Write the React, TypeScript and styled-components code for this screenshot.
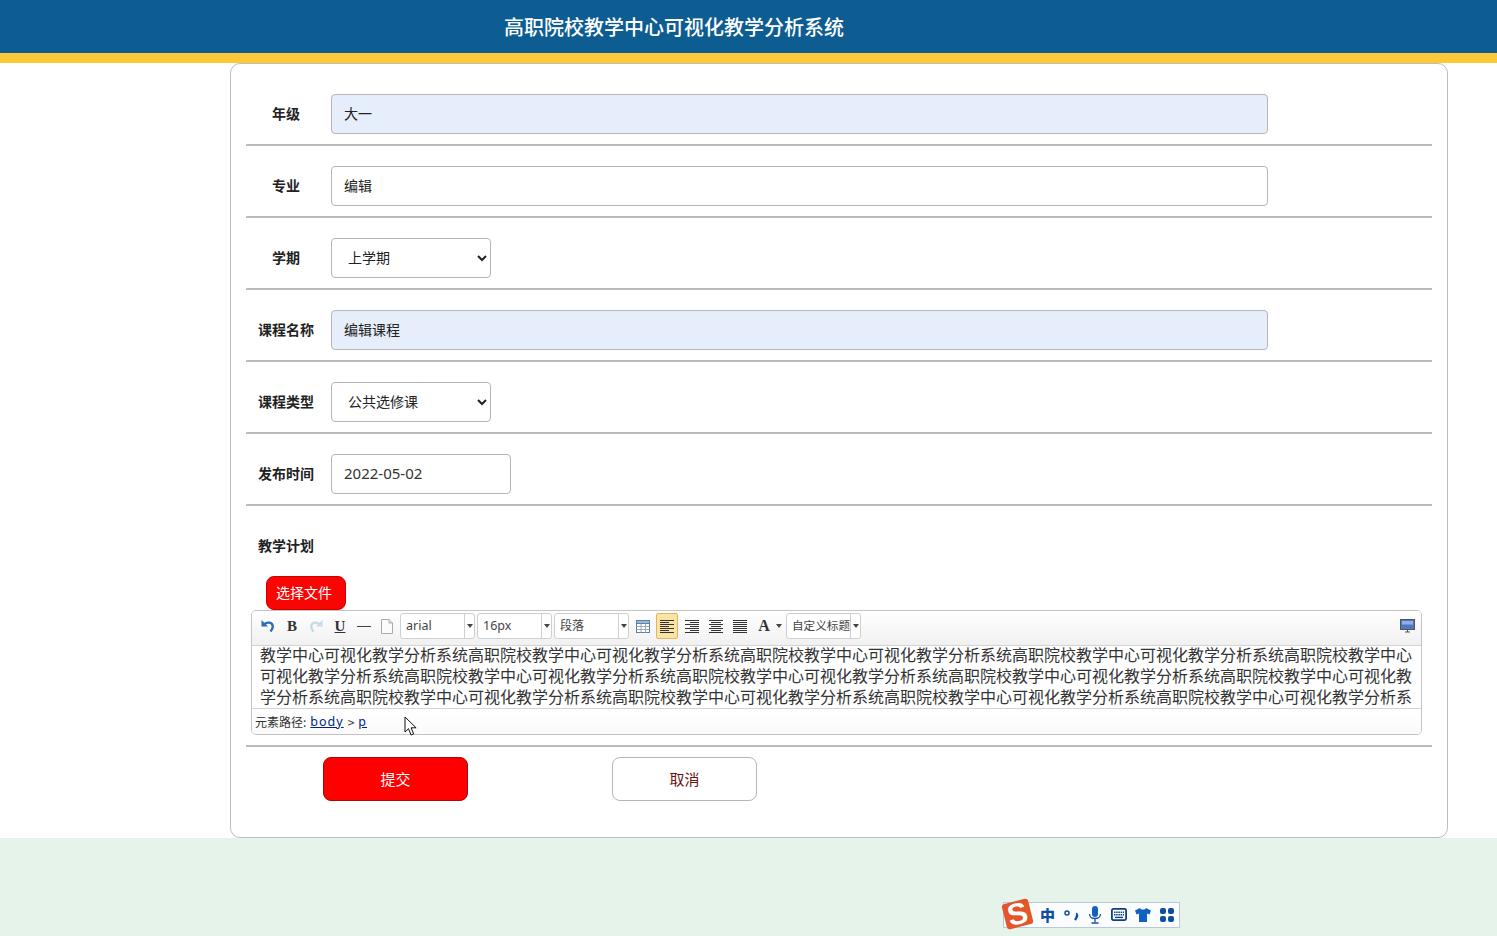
import styled, { createGlobalStyle } from 'styled-components';

const GlobalStyle = createGlobalStyle`
  html, body {
    margin: 0;
    padding: 0;
    background: #e5f3ea;
  }
  body {
    font-family: "Noto Sans CJK SC", "Noto Sans", sans-serif;
  }
  * {
    box-sizing: border-box;
  }
`;

const Page = styled.div`
  position: relative;
  width: 1497px;
  height: 936px;
  overflow: hidden;
  background: #e5f3ea;
`;

const Header = styled.header`
  height: 63px;
  background: #0d5c92;
  border-bottom: 10px solid #fdc938;
  padding-left: 504px;
`;

const Title = styled.h1`
  margin: 0;
  font-size: 20px;
  line-height: 53px;
  font-weight: 500;
  color: #fff;
`;

const Main = styled.main`
  background: #fff;
  padding-left: 230px;
`;

const Card = styled.div`
  width: 1218px;
  height: 775px;
  padding: 10px 15px;
  background: #fff;
  border: 1px solid #bdbdbd;
  border-radius: 10px;
`;

const FormRow = styled.div`
  display: flex;
  align-items: flex-start;
  height: 72px;
  padding-top: 20px;
  border-bottom: 2px solid #bbb;
`;

const EditorRow = styled.div`
  height: 241px;
  padding-top: 20px;
  border-bottom: 2px solid #bbb;
`;

const Label = styled.label`
  width: 80px;
  height: 40px;
  margin-right: 5px;
  flex: none;
  display: block;
  font-size: 14px;
  line-height: 38px;
  font-weight: 700;
  text-align: center;
  color: #222;
`;

const TextInput = styled.input<{ $filled?: boolean; $width?: number }>`
  display: block;
  width: ${(p) => p.$width ?? 937}px;
  height: 40px;
  padding: 0 12px 2px;
  font-family: "Noto Sans CJK SC", "Noto Sans", sans-serif;
  font-size: 14px;
  color: #222;
  background: ${(p) => (p.$filled ? '#e5eefa' : '#fff')};
  border: 1px solid #b5b5b5;
  border-radius: 4px;
  outline: none;
`;

const DateInput = styled(TextInput)`
  font-family: "Noto Sans", sans-serif;
  font-size: 15px;
  color: #333;
`;

const Select = styled.select`
  display: block;
  width: 160px;
  height: 40px;
  padding: 0 12px 2px;
  font-family: "Noto Sans CJK SC", sans-serif;
  font-size: 14px;
  color: #222;
  background: #fff;
  border: 1px solid #b5b5b5;
  border-radius: 4px;
  outline: none;
`;

const FileButton = styled.button`
  display: block;
  width: 80px;
  height: 34px;
  margin: 10px 0 0 20px;
  padding: 0 4px 3px 0;
  font-family: "Noto Sans CJK SC", sans-serif;
  font-size: 14px;
  color: #fff;
  background: #fb0404;
  border: 1px solid #c00;
  border-radius: 8px;
`;

const Editor = styled.div`
  width: 1171px;
  height: 125px;
  margin-left: 5px;
  display: flex;
  flex-direction: column;
  background: #fff;
  border: 1px solid #c4c4c4;
  border-radius: 5px;
  overflow: hidden;
`;

const Toolbar = styled.div`
  display: flex;
  align-items: center;
  flex: none;
  height: 35px;
  padding: 0 2px 4px 2px;
  background: linear-gradient(#ffffff, #f1f1f1);
  border-bottom: 1px solid #d4d4d4;
`;

const ToolIcon = styled.span<{ $active?: boolean; $width?: number }>`
  display: flex;
  align-items: center;
  justify-content: center;
  flex: none;
  width: ${(p) => p.$width ?? 24}px;
  height: 26px;
  color: #333;
  background: ${(p) => (p.$active ? '#fbe3a6' : 'transparent')};
  border: 1px solid ${(p) => (p.$active ? '#e0b75e' : 'transparent')};
  border-radius: 2px;
`;

const TableIcon = styled(ToolIcon)`
  margin-left: 1px;
`;

const ToolLetter = styled.span<{ $underline?: boolean; $size?: number }>`
  font-family: "Liberation Serif", serif;
  font-size: ${(p) => p.$size ?? 15}px;
  font-weight: 700;
  color: #333;
  text-decoration: ${(p) => (p.$underline ? 'underline' : 'none')};
`;

const Combo = styled.div<{ $width: number; $gap?: number }>`
  display: flex;
  flex: none;
  width: ${(p) => p.$width}px;
  height: 26px;
  margin-left: ${(p) => p.$gap ?? 2}px;
  background: #fff;
  border: 1px solid #cfcfcf;
  border-radius: 3px;
`;

const ComboText = styled.span<{ $size?: number }>`
  flex: 1;
  padding-left: 5px;
  font-family: "Noto Sans", "Noto Sans CJK SC", sans-serif;
  font-size: ${(p) => p.$size ?? 12.5}px;
  line-height: 24px;
  color: #444;
  white-space: nowrap;
  overflow: hidden;
  border-right: 1px solid #cfcfcf;
`;

const ComboArrow = styled.span`
  display: flex;
  align-items: center;
  justify-content: center;
  flex: none;
  width: 9px;
  &::before {
    content: '';
    border: 3px solid transparent;
    border-top: 4px solid #444;
    border-bottom: 0;
  }
`;

const Caret = styled.span`
  flex: none;
  width: 0;
  margin: 0 4px 0 2px;
  border: 3px solid transparent;
  border-top: 4px solid #444;
  border-bottom: 0;
`;

const ToolbarSpacer = styled.span`
  flex: 1;
`;

const EditorBody = styled.div`
  flex: 1;
  padding-left: 8px;
  border-bottom: 1px solid #d4d4d4;
`;

const EditorText = styled.p`
  width: 1154px;
  margin: -2px 0 0;
  font-family: "Noto Sans CJK SC", sans-serif;
  font-size: 16px;
  line-height: 21px;
  color: #333;
  word-break: break-all;
`;

const StatusBar = styled.div`
  display: flex;
  gap: 4px;
  flex: none;
  height: 25px;
  padding-left: 3px;
  font-size: 12px;
  line-height: 26px;
  color: #333;
  background: linear-gradient(#fff, #fafafa);
`;

const PathLink = styled.a`
  font-family: "Noto Sans", sans-serif;
  font-size: 12.5px;
  letter-spacing: 1px;
  color: #00247d;
  text-decoration: underline;
`;

const Actions = styled.div`
  display: flex;
  gap: 144px;
  margin-top: 10px;
  padding-left: 77px;
`;

const ActionButton = styled.button<{ $primary?: boolean }>`
  width: 145px;
  height: 44px;
  padding: 0 0 2px;
  font-family: "Noto Sans CJK SC", sans-serif;
  font-size: 15px;
  color: ${(p) => (p.$primary ? '#fff' : '#6a1414')};
  background: ${(p) => (p.$primary ? '#fe0000' : '#fff')};
  border: 1px solid ${(p) => (p.$primary ? '#a80808' : '#b5b5b5')};
  border-radius: 8px;
`;

const Pointer = styled.svg`
  position: absolute;
  left: 404px;
  top: 716px;
`;

const ImeBar = styled.div`
  position: absolute;
  left: 1003px;
  top: 899px;
  display: flex;
  align-items: center;
  width: 177px;
  height: 30px;
`;

const ImeLogo = styled.span`
  position: absolute;
  left: 1px;
  top: 2px;
  width: 27px;
  height: 26px;
  font-family: "Liberation Sans", sans-serif;
  font-size: 30px;
  line-height: 26px;
  font-weight: 700;
  text-align: center;
  color: #fff;
  background: #e2562a;
  border-radius: 3px;
  transform: rotate(-14deg);
`;

const ImeTray = styled.div`
  display: flex;
  align-items: center;
  justify-content: space-between;
  width: 100%;
  height: 26px;
  margin-top: 2px;
  padding: 0 5px 1px 36px;
  background: #fbfcfd;
  border: 1px solid #b9c9d6;
`;

const ImeChar = styled.span`
  font-size: 15px;
  font-weight: 900;
  line-height: 20px;
  color: #0f4fa0;
`;

const rows = ['年级', '专业', '学期', '课程名称', '课程类型', '发布时间'];

// three lines of 72 characters in the editor
const planText = (
  '教学中心可视化教学分析系统' +
  '高职院校教学中心可视化教学分析系统'.repeat(12)
).slice(0, 216);

function AlignIcon({ lines }: { lines: [number, number][] }) {
  return (
    <svg width="14" height="13" viewBox="0 0 14 13">
      {lines.map(([x, w], i) => (
        <rect key={i} x={x} y={i * 2} width={w} height="1" fill="#333" />
      ))}
    </svg>
  );
}

export default function App() {
  return (
    <Page>
      <GlobalStyle />
      <Header>
        <Title>高职院校教学中心可视化教学分析系统</Title>
      </Header>
      <Main>
        <Card>
          <FormRow>
            <Label>{rows[0]}</Label>
            <TextInput $filled readOnly value="大一" />
          </FormRow>
          <FormRow>
            <Label>{rows[1]}</Label>
            <TextInput readOnly value="编辑" />
          </FormRow>
          <FormRow>
            <Label>{rows[2]}</Label>
            <Select defaultValue="上学期">
              <option>上学期</option>
              <option>下学期</option>
            </Select>
          </FormRow>
          <FormRow>
            <Label>{rows[3]}</Label>
            <TextInput $filled readOnly value="编辑课程" />
          </FormRow>
          <FormRow>
            <Label>{rows[4]}</Label>
            <Select defaultValue="公共选修课">
              <option>公共选修课</option>
              <option>专业必修课</option>
            </Select>
          </FormRow>
          <FormRow>
            <Label>{rows[5]}</Label>
            <DateInput $width={180} readOnly value="2022-05-02" />
          </FormRow>
          <EditorRow>
            <Label>教学计划</Label>
            <FileButton type="button">选择文件</FileButton>
            <Editor>
              <Toolbar>
                <ToolIcon $width={26}>
                  <svg width="15" height="14" viewBox="0 0 15 14">
                    <path d="M1.500 1v6.500H8z" fill="#2a6db8" />
                    <path d="M4 5.500C7 2.500 12.500 3 12.800 7.500c.1 2-1 3.500-2.300 5" fill="none" stroke="#2a6db8" strokeWidth="2.400" />
                  </svg>
                </ToolIcon>
                <ToolIcon>
                  <ToolLetter>B</ToolLetter>
                </ToolIcon>
                <ToolIcon>
                  <svg width="15" height="14" viewBox="0 0 15 14">
                    <path d="M13.500 1v6.500H7z" fill="#c6dbe8" />
                    <path d="M11 5.500C8 2.500 2.500 3 2.200 7.500c-.1 2 1 3.500 2.300 5" fill="none" stroke="#c6dbe8" strokeWidth="2.400" />
                  </svg>
                </ToolIcon>
                <ToolIcon>
                  <ToolLetter $underline>U</ToolLetter>
                </ToolIcon>
                <ToolIcon>
                  <svg width="14" height="3" viewBox="0 0 14 3">
                    <rect y="1" width="14" height="1" fill="#444" />
                  </svg>
                </ToolIcon>
                <ToolIcon $width={22}>
                  <svg width="12" height="15" viewBox="0 0 12 15">
                    <path d="M.5.500h7.500l3.500 3.500v10.500H.5z" fill="#fbfbfb" stroke="#aaa" />
                    <path d="M8 .5V4h3.500" fill="#e6e6e6" stroke="#aaa" />
                  </svg>
                </ToolIcon>
                <Combo $width={75}>
                  <ComboText>arial</ComboText>
                  <ComboArrow />
                </Combo>
                <Combo $width={75}>
                  <ComboText>16px</ComboText>
                  <ComboArrow />
                </Combo>
                <Combo $width={75}>
                  <ComboText $size={12}>段落</ComboText>
                  <ComboArrow />
                </Combo>
                <TableIcon $width={26}>
                  <svg width="14" height="13" viewBox="0 0 14 13">
                    <rect x=".5" y=".5" width="13" height="12" fill="#fff" stroke="#5b7fa6" />
                    <rect x=".5" y=".5" width="13" height="3" fill="#9db8d6" stroke="#5b7fa6" />
                    <path d="M.5 6.500h13M.5 9.500h13M5 3.500v9M9.500 3.500v9" stroke="#9aa9ba" fill="none" />
                  </svg>
                </TableIcon>
                <ToolIcon $active $width={22}>
                  <AlignIcon lines={[[0, 14], [0, 9], [0, 14], [0, 9], [0, 14], [0, 9], [0, 14]]} />
                </ToolIcon>
                <ToolIcon $width={28}>
                  <AlignIcon lines={[[0, 14], [5, 9], [0, 14], [5, 9], [0, 14], [5, 9], [0, 14]]} />
                </ToolIcon>
                <ToolIcon $width={20}>
                  <AlignIcon lines={[[0, 14], [2, 10], [0, 14], [2, 10], [0, 14], [2, 10], [0, 14]]} />
                </ToolIcon>
                <ToolIcon $width={28}>
                  <AlignIcon lines={[[0, 14], [0, 14], [0, 14], [0, 14], [0, 14], [0, 14], [0, 14]]} />
                </ToolIcon>
                <ToolIcon $width={20}>
                  <ToolLetter $size={16}>A</ToolLetter>
                </ToolIcon>
                <Caret />
                <Combo $width={75} $gap={0}>
                  <ComboText $size={11.6}>自定义标题</ComboText>
                  <ComboArrow />
                </Combo>
                <ToolbarSpacer />
                <ToolIcon>
                  <svg width="15" height="14" viewBox="0 0 15 14">
                    <rect x=".5" y=".5" width="14" height="10" fill="#4f78c4" stroke="#555" />
                    <rect x="2" y="2" width="11" height="3.500" fill="#8fb0e6" />
                    <path d="M5 13h5M7.500 10.500V13" stroke="#555" fill="none" />
                  </svg>
                </ToolIcon>
              </Toolbar>
              <EditorBody>
                <EditorText>{planText}</EditorText>
              </EditorBody>
              <StatusBar>
                <span>元素路径:</span>
                <PathLink>body</PathLink>
                <span>&gt;</span>
                <PathLink>p</PathLink>
              </StatusBar>
            </Editor>
          </EditorRow>
          <Actions>
            <ActionButton $primary type="button">提交</ActionButton>
            <ActionButton type="button">取消</ActionButton>
          </Actions>
        </Card>
      </Main>
      <Pointer width="14" height="21" viewBox="0 0 14 21">
        <path d="M1 1v15l3.500-3.300 2.600 6.300 2.600-1.100-2.600-6.100h5z" fill="#fff" stroke="#111" />
      </Pointer>
      <ImeBar>
        <ImeTray>
          <ImeChar>中</ImeChar>
          <svg width="16" height="14" viewBox="0 0 16 14">
            <circle cx="3" cy="5" r="2" fill="none" stroke="#0f4fa0" strokeWidth="1.500" />
            <path d="M12 6c1.500 0 1.500 3-1 6" fill="none" stroke="#0f4fa0" strokeWidth="2.500" />
          </svg>
          <svg width="14" height="18" viewBox="0 0 14 18">
            <rect x="4" y="0" width="6" height="11" rx="3" fill="#0f62c0" />
            <path d="M1.500 8c0 6 11 6 11 0M7 13v3M3.500 17h7" fill="none" stroke="#0f4fa0" strokeWidth="1.300" />
          </svg>
          <svg width="16" height="13" viewBox="0 0 16 13">
            <rect x=".9" y=".9" width="14.200" height="11.200" rx="1.500" fill="#fff" stroke="#0b3f86" strokeWidth="1.800" />
            <path d="M3 4.200h10M3 6.700h10" stroke="#0b3f86" strokeWidth="1.500" strokeDasharray="1.500 .7" />
            <path d="M4 9.400h8" stroke="#0b3f86" strokeWidth="1.400" />
          </svg>
          <svg width="16" height="14" viewBox="0 0 16 14">
            <path d="M5 0L0 2.500l1.500 4L4 5.600V14h8V5.600l2.500.9 1.500-4L11 0c-.5 2-5.500 2-6 0z" fill="#0f62c0" />
          </svg>
          <svg width="14" height="14" viewBox="0 0 14 14">
            <rect x="0" y="0" width="6" height="6" rx="2" fill="#0f4fa0" />
            <rect x="8" y="0" width="6" height="6" rx="2" fill="#0f4fa0" />
            <rect x="0" y="8" width="6" height="6" rx="2" fill="#0f4fa0" />
            <rect x="8" y="8" width="6" height="6" rx="2" fill="#0f4fa0" />
          </svg>
        </ImeTray>
        <ImeLogo>S</ImeLogo>
      </ImeBar>
    </Page>
  );
}
